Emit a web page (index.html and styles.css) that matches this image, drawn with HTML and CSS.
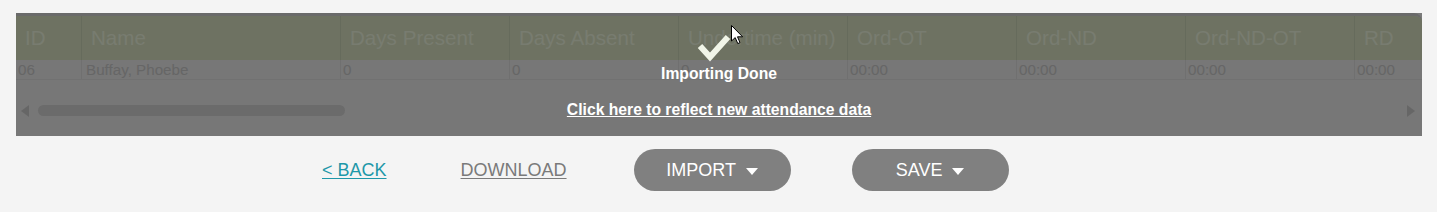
FILE: index.html
```html
<!DOCTYPE html>
<html>
<head>
<meta charset="utf-8">
<link rel="stylesheet" href="styles.css">
</head>
<body>
<div class="panel">
  <div class="grid-wrap">
    <div class="table">
      <div class="row head">
        <div class="cell c-id">ID</div>
        <div class="cell c-name">Name</div>
        <div class="cell">Days Present</div>
        <div class="cell">Days Absent</div>
        <div class="cell">Undertime (min)</div>
        <div class="cell">Ord-OT</div>
        <div class="cell">Ord-ND</div>
        <div class="cell">Ord-ND-OT</div>
        <div class="cell">RD</div>
      </div>
      <div class="row body">
        <div class="cell c-id">06</div>
        <div class="cell c-name">Buffay, Phoebe</div>
        <div class="cell">0</div>
        <div class="cell">0</div>
        <div class="cell">0</div>
        <div class="cell">00:00</div>
        <div class="cell">00:00</div>
        <div class="cell">00:00</div>
        <div class="cell">00:00</div>
      </div>
    </div>
    <div class="scrollbar">
      <span class="arrow left"></span>
      <span class="thumb"></span>
      <span class="track"></span>
      <span class="arrow right"></span>
    </div>
  </div>
  <div class="overlay">
    <svg class="check" width="36" height="30" viewBox="0 0 36 30">
      <polyline points="3,13 13,24 31,4" fill="none" stroke="#f1f5e8" stroke-width="6"/>
    </svg>
    <div class="done">Importing Done</div>
    <a class="reflect" href="#">Click here to reflect new attendance data</a>
    <svg class="cursor" width="13" height="20" viewBox="0 0 13 20">
      <path d="M0.5,0.5 L0.5,16 L4.2,12.6 L6.8,18.6 L9,17.6 L6.5,11.8 L11.6,11.8 Z" fill="#fff" stroke="#000" stroke-width="1" stroke-linejoin="miter"/>
    </svg>
  </div>
</div>
<div class="actions">
  <a class="link back" href="#">&lt; BACK</a>
  <a class="link download" href="#">DOWNLOAD</a>
  <button class="btn import">IMPORT <span class="caret"></span></button>
  <button class="btn save">SAVE <span class="caret"></span></button>
</div>
</body>
</html>
```
FILE: styles.css
```css
html, body {
  margin: 0;
  padding: 0;
}
body {
  background: #f4f4f4;
  font-family: "Liberation Sans", Arial, sans-serif;
  width: 1437px;
  height: 212px;
  overflow: hidden;
}
.panel {
  position: relative;
  margin: 13px 15px 0 16px;
  height: 123px;
}
.grid-wrap {
  height: 123px;
  background: #eeeeee;
  overflow: hidden;
  border-top-right-radius: 8px;
  display: flex;
  flex-direction: column;
}
.table {
  border-top: 3px solid #d4d4d4;
  border-top-right-radius: 8px;
  overflow: hidden;
}
.row {
  display: flex;
  white-space: nowrap;
}
.cell {
  flex: 0 0 169px;
  box-sizing: border-box;
  border-right: 1px solid transparent;
  overflow: hidden;
}
.cell.c-id { flex-basis: 66px; }
.cell.c-name { flex-basis: 259px; }
.head {
  height: 44px;
  background: #dce4c4;
  color: #f0f8e0;
  font-size: 20.6px;
  align-items: stretch;
  border-left: 1px solid #8dc641;
  margin-left: -1px;
}
.head .cell {
  border-right-color: #ccd6b8;
  padding: 10px 0 0 9px;
}
.body {
  height: 20px;
  background: #eeeeee;
  color: #cccccc;
  font-size: 15.2px;
  border-bottom: 1px solid #e2e2e2;
  box-sizing: border-box;
}
.body .cell {
  border-right-color: #e0e0e0;
  padding: 1px 0 0 2px;
}
.body .cell.c-name { padding-left: 4px; }
.scrollbar {
  display: flex;
  align-items: center;
  margin-top: 25px;
  height: 11px;
  padding: 0 7px 0 5px;
}
.arrow {
  width: 0;
  height: 0;
  border-top: 6px solid transparent;
  border-bottom: 6px solid transparent;
}
.arrow.left { border-right: 8px solid #cdcdcd; }
.arrow.right { border-left: 8px solid #cdcdcd; }
.thumb {
  width: 307px;
  height: 11px;
  border-radius: 6px;
  background: #d6d6d6;
  margin-left: 9px;
}
.track { flex: 1; }
.overlay {
  position: absolute;
  inset: 0;
  background: rgba(0, 0, 0, 0.5);
  display: flex;
  flex-direction: column;
  align-items: center;
  color: #fff;
  font-weight: bold;
  font-size: 15.7px;
}
.check {
  margin-top: 20px;
  margin-left: -8px;
  display: block;
}
.done {
  margin-top: 1px;
  line-height: 19px;
}
.reflect {
  margin-top: 17px;
  color: #fff;
  text-decoration: underline;
  line-height: 19px;
}
.cursor {
  position: absolute;
  left: 715px;
  top: 12px;
}
.actions {
  display: flex;
  align-items: center;
  margin-top: 13px;
  padding-left: 322px;
  height: 42px;
}
.link {
  font-size: 18px;
  text-decoration: underline;
  text-underline-offset: 2px;
}
.back {
  color: #1f98a9;
}
.download {
  color: #7a7a7a;
  margin-left: 74px;
}
.btn {
  width: 157px;
  height: 42px;
  border: none;
  border-radius: 21px;
  background: #808080;
  color: #fff;
  font-family: "Liberation Sans", Arial, sans-serif;
  font-size: 18px;
  display: flex;
  align-items: center;
  justify-content: center;
  gap: 10px;
  padding: 0;
}
.import { margin-left: 67px; }
.save { margin-left: 61px; }
.caret {
  width: 0;
  height: 0;
  border-left: 6px solid transparent;
  border-right: 6px solid transparent;
  border-top: 7px solid #fff;
  margin-top: 3px;
}
```
